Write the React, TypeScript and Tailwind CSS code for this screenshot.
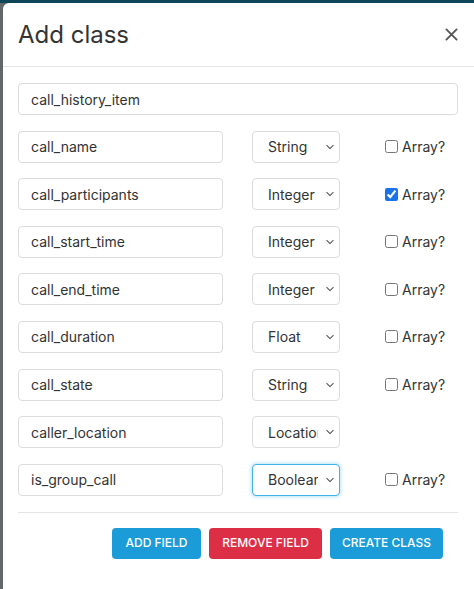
import { useState } from "react";

type Field = {
  name: string;
  type: string;
  array: boolean | null;
  focused?: boolean;
};

const initialFields: Field[] = [
  { name: "call_name", type: "String", array: false },
  { name: "call_participants", type: "Integer", array: true },
  { name: "call_start_time", type: "Integer", array: false },
  { name: "call_end_time", type: "Integer", array: false },
  { name: "call_duration", type: "Float", array: false },
  { name: "call_state", type: "String", array: false },
  { name: "caller_location", type: "Location", array: null },
  { name: "is_group_call", type: "Boolean", array: false, focused: true },
];

const types = ["String", "Integer", "Float", "Boolean", "Location"];

const inputClass =
  "h-8 rounded-[4px] border border-[#dcdcdc] bg-white px-3 text-[14px] text-[#333] outline-none";

function Chevron() {
  return (
    <svg
      viewBox="0 0 10 6"
      className="pointer-events-none absolute right-[6px] top-1/2 h-[5px] w-[8px] -translate-y-1/2"
      fill="none"
      stroke="#555"
      strokeWidth={1.3}
      strokeLinecap="round"
      strokeLinejoin="round"
    >
      <path d="M1 1l4 4 4-4" />
    </svg>
  );
}

function FieldRow({
  field,
  onChange,
}: {
  field: Field;
  onChange: (f: Field) => void;
}) {
  return (
    <div className="flex items-center">
      <input
        className={`${inputClass} w-[205px]`}
        value={field.name}
        onChange={(e) => onChange({ ...field, name: e.target.value })}
      />
      <div className="relative ml-[29px] w-[88px]">
        <select
          value={field.type}
          onChange={(e) => onChange({ ...field, type: e.target.value })}
          className={`h-8 w-full appearance-none rounded-[4px] border bg-white pl-[15px] pr-[21px] text-[14px] text-[#333] outline-none ${
            field.focused
              ? "border-[#3fb3e6] shadow-[0_0_4px_rgba(63,179,230,0.55)]"
              : "border-[#dcdcdc]"
          }`}
        >
          {types.map((t) => (
            <option key={t} value={t}>
              {t}
            </option>
          ))}
        </select>
        <Chevron />
      </div>
      {field.array !== null && (
        <label className="ml-[45px] flex items-center gap-[4px] text-[14px] text-[#333]">
          <input
            type="checkbox"
            checked={field.array}
            onChange={(e) => onChange({ ...field, array: e.target.checked })}
            className="m-0 h-[13px] w-[13px] accent-[#1a73e8]"
          />
          Array?
        </label>
      )}
    </div>
  );
}

export default function App() {
  const [className, setClassName] = useState("call_history_item");
  const [fields, setFields] = useState(initialFields);

  return (
    <div
      className="flex h-[589px] w-[474px] flex-col overflow-hidden bg-[#5f6366]"
      style={{ fontFamily: "Inter, 'Noto Sans', sans-serif" }}
    >
      <div className="h-[3px] shrink-0 bg-[#0d4659]" />
      <div className="flex flex-1">
        <div className="w-[3px] shrink-0 bg-[#63676a]" />
        <div className="flex-1 rounded-tl-[6px] bg-white">
          <div className="flex h-[64px] items-center justify-between border-b border-[#e5e5e5] pl-[15px] pr-[16px]">
            <h2 className="text-[24px] font-normal text-[#333]">Add class</h2>
            <button type="button" aria-label="Close" className="text-[#555]">
              <svg viewBox="0 0 14 14" className="h-[13px] w-[13px]" stroke="currentColor" strokeWidth={2} strokeLinecap="round">
                <path d="M1.5 1.5l11 11M12.5 1.5l-11 11" />
              </svg>
            </button>
          </div>

          <div className="flex flex-col gap-[15.6px] px-[15px] pt-4">
            <input
              className={`${inputClass} w-[440px]`}
              value={className}
              onChange={(e) => setClassName(e.target.value)}
            />
            {fields.map((f, i) => (
              <FieldRow
                key={i}
                field={f}
                onChange={(nf) =>
                  setFields((prev) => prev.map((p, j) => (j === i ? nf : p)))
                }
              />
            ))}
          </div>

          <div className="mx-[15px] mt-4 w-[440px] border-t border-[#e5e5e5] pt-[15px]">
            <div className="flex justify-end gap-2 pr-[15px]">
              <button
                type="button"
                className="h-[31px] w-[89px] rounded-[4px] bg-[#1b9cd8] text-[12px] font-medium text-white"
              >
                ADD FIELD
              </button>
              <button
                type="button"
                className="h-[31px] w-[113px] rounded-[4px] bg-[#dc2f45] text-[12px] font-medium text-white"
              >
                REMOVE FIELD
              </button>
              <button
                type="button"
                className="h-[31px] w-[113px] rounded-[4px] bg-[#1b9cd8] text-[12px] font-medium text-white"
              >
                CREATE CLASS
              </button>
            </div>
          </div>
        </div>
      </div>
    </div>
  );
}
